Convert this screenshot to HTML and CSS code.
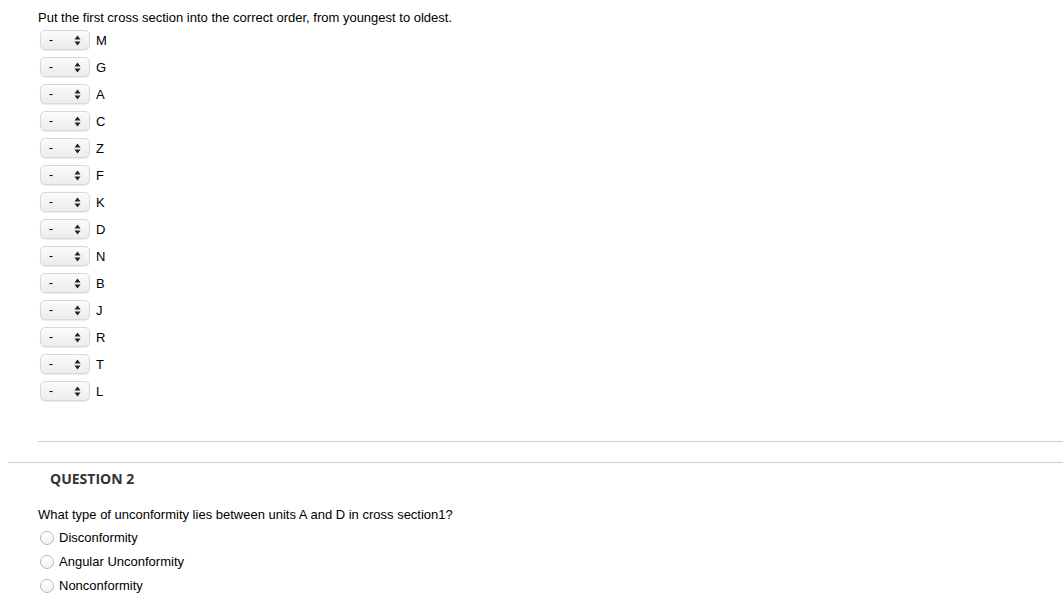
FILE: index.html
```html
<!DOCTYPE html>
<html>
<head>
<meta charset="utf-8">
<link rel="stylesheet" href="styles.css">
</head>
<body>
<div class="q1">
  <p class="prompt">Put the first cross section into the correct order, from youngest to oldest.</p>
  <div class="rows">
    <div class="row"><span class="sel"><span class="dash">-</span><svg class="arr" width="7" height="11" viewBox="0 0 7 11"><path d="M3.5 0.5L6.5 4.5H0.5Z M3.5 10.5L6.5 6.5H0.5Z" fill="#222"/></svg></span><span class="lbl">M</span></div>
    <div class="row"><span class="sel"><span class="dash">-</span><svg class="arr" width="7" height="11" viewBox="0 0 7 11"><path d="M3.5 0.5L6.5 4.5H0.5Z M3.5 10.5L6.5 6.5H0.5Z" fill="#222"/></svg></span><span class="lbl">G</span></div>
    <div class="row"><span class="sel"><span class="dash">-</span><svg class="arr" width="7" height="11" viewBox="0 0 7 11"><path d="M3.5 0.5L6.5 4.5H0.5Z M3.5 10.5L6.5 6.5H0.5Z" fill="#222"/></svg></span><span class="lbl">A</span></div>
    <div class="row"><span class="sel"><span class="dash">-</span><svg class="arr" width="7" height="11" viewBox="0 0 7 11"><path d="M3.5 0.5L6.5 4.5H0.5Z M3.5 10.5L6.5 6.5H0.5Z" fill="#222"/></svg></span><span class="lbl">C</span></div>
    <div class="row"><span class="sel"><span class="dash">-</span><svg class="arr" width="7" height="11" viewBox="0 0 7 11"><path d="M3.5 0.5L6.5 4.5H0.5Z M3.5 10.5L6.5 6.5H0.5Z" fill="#222"/></svg></span><span class="lbl">Z</span></div>
    <div class="row"><span class="sel"><span class="dash">-</span><svg class="arr" width="7" height="11" viewBox="0 0 7 11"><path d="M3.5 0.5L6.5 4.5H0.5Z M3.5 10.5L6.5 6.5H0.5Z" fill="#222"/></svg></span><span class="lbl">F</span></div>
    <div class="row"><span class="sel"><span class="dash">-</span><svg class="arr" width="7" height="11" viewBox="0 0 7 11"><path d="M3.5 0.5L6.5 4.5H0.5Z M3.5 10.5L6.5 6.5H0.5Z" fill="#222"/></svg></span><span class="lbl">K</span></div>
    <div class="row"><span class="sel"><span class="dash">-</span><svg class="arr" width="7" height="11" viewBox="0 0 7 11"><path d="M3.5 0.5L6.5 4.5H0.5Z M3.5 10.5L6.5 6.5H0.5Z" fill="#222"/></svg></span><span class="lbl">D</span></div>
    <div class="row"><span class="sel"><span class="dash">-</span><svg class="arr" width="7" height="11" viewBox="0 0 7 11"><path d="M3.5 0.5L6.5 4.5H0.5Z M3.5 10.5L6.5 6.5H0.5Z" fill="#222"/></svg></span><span class="lbl">N</span></div>
    <div class="row"><span class="sel"><span class="dash">-</span><svg class="arr" width="7" height="11" viewBox="0 0 7 11"><path d="M3.5 0.5L6.5 4.5H0.5Z M3.5 10.5L6.5 6.5H0.5Z" fill="#222"/></svg></span><span class="lbl">B</span></div>
    <div class="row"><span class="sel"><span class="dash">-</span><svg class="arr" width="7" height="11" viewBox="0 0 7 11"><path d="M3.5 0.5L6.5 4.5H0.5Z M3.5 10.5L6.5 6.5H0.5Z" fill="#222"/></svg></span><span class="lbl">J</span></div>
    <div class="row"><span class="sel"><span class="dash">-</span><svg class="arr" width="7" height="11" viewBox="0 0 7 11"><path d="M3.5 0.5L6.5 4.5H0.5Z M3.5 10.5L6.5 6.5H0.5Z" fill="#222"/></svg></span><span class="lbl">R</span></div>
    <div class="row"><span class="sel"><span class="dash">-</span><svg class="arr" width="7" height="11" viewBox="0 0 7 11"><path d="M3.5 0.5L6.5 4.5H0.5Z M3.5 10.5L6.5 6.5H0.5Z" fill="#222"/></svg></span><span class="lbl">T</span></div>
    <div class="row"><span class="sel"><span class="dash">-</span><svg class="arr" width="7" height="11" viewBox="0 0 7 11"><path d="M3.5 0.5L6.5 4.5H0.5Z M3.5 10.5L6.5 6.5H0.5Z" fill="#222"/></svg></span><span class="lbl">L</span></div>
  </div>
  <div class="rule1"></div>
</div>
<div class="rule2"></div>
<div class="q2">
  <h3 class="qtitle">QUESTION 2</h3>
  <p class="qtext">What type of unconformity lies between units A and D in cross section1?</p>
  <div class="opts">
    <div class="opt"><span class="radio"></span><span>Disconformity</span></div>
    <div class="opt"><span class="radio"></span><span>Angular Unconformity</span></div>
    <div class="opt"><span class="radio"></span><span>Nonconformity</span></div>
  </div>
</div>
</body>
</html>
```
FILE: styles.css
```css
html, body { margin: 0; padding: 0; background: #fff; }
body {
  font-family: "Liberation Sans", Arial, sans-serif;
  font-size: 13px;
  color: #000;
  padding: 0 0 0 8px;
}
.q1 { padding: 10px 0 0 30px; }
.prompt { margin: 0; line-height: 15px; height: 15px; }
.rows { display: flex; flex-direction: column; gap: 7px; margin-top: 5px; }
.row { display: flex; align-items: center; height: 20px; }
.sel {
  box-sizing: border-box;
  width: 50px; height: 20px;
  margin-left: 2px;
  border-radius: 5px;
  background: linear-gradient(#fbfbfb, #ececec);
  border: 1px solid #d8d8d8;
  box-shadow: 0 1px 1px rgba(0,0,0,0.08);
  display: flex; align-items: center; justify-content: space-between;
  padding: 0 8px 0 8px;
  font-size: 12px;
}
.dash { line-height: 1; }
.arr { display: block; }
.lbl { margin-left: 6px; line-height: 15px; }
.rule1 { height: 1px; background: #cfcfcf; margin-top: 40px; }
.rule2 { height: 1px; background: #cfcfcf; margin-top: 20px; }
.q2 { padding: 0 0 0 30px; }
.qtitle {
  font-family: "Open Sans", sans-serif;
  font-weight: 700;
  font-size: 14px;
  color: #333;
  margin: 6px 0 0 12px;
  line-height: 20px;
}
.qtext { margin: 18px 0 0 0; line-height: 15px; }
.opts { display: flex; flex-direction: column; gap: 9px; margin-top: 8px; }
.opt { display: flex; align-items: center; height: 15px; }
.radio {
  box-sizing: border-box;
  width: 14px; height: 14px;
  border-radius: 50%;
  border: 1px solid #b8b8b8;
  background: linear-gradient(#fff, #f3f3f3);
  margin: 0 5px 0 2px;
}
```
